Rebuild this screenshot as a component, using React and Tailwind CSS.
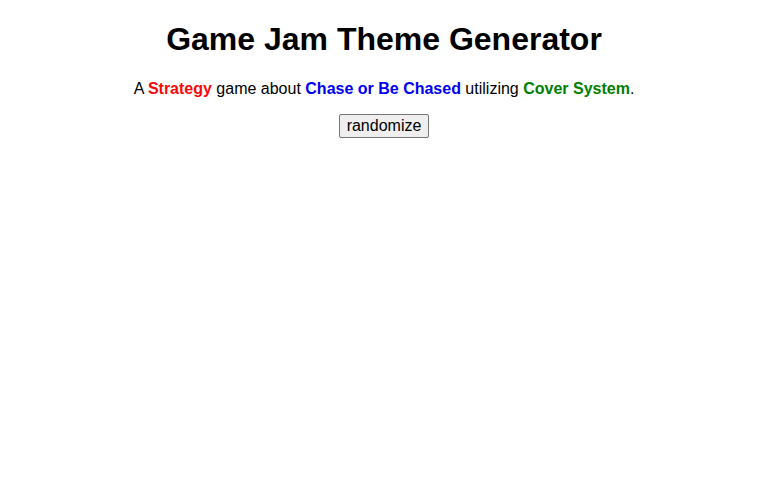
import { useState } from 'react'

const genres = ['Strategy', 'Platformer', 'Puzzle', 'Racing', 'Horror', 'Stealth']
const themes = ['Chase or Be Chased', 'Lost in Space', 'Time Loop', 'Growing Up', 'Two Worlds']
const mechanics = ['Cover System', 'Double Jump', 'Crafting', 'Grappling Hook', 'Card Drafting']

function pick(list) {
  return list[Math.floor(Math.random() * list.length)]
}

export default function App() {
  const [idea, setIdea] = useState({
    genre: genres[0],
    theme: themes[0],
    mechanic: mechanics[0],
  })

  function randomize() {
    setIdea({
      genre: pick(genres),
      theme: pick(themes),
      mechanic: pick(mechanics),
    })
  }

  return (
    <main className="flex min-h-screen flex-col items-center gap-4 bg-white px-2 pt-5 text-center font-['Liberation_Sans',Arial,sans-serif] text-base leading-[18px] text-black">
      <h1 className="mb-1.5 text-[32px] leading-[38px] font-bold">Game Jam Theme Generator</h1>

      <p>
        A <span className="font-bold text-[#f80808]">{idea.genre}</span> game about{' '}
        <span className="font-bold text-[#0000f0]">{idea.theme}</span> utilizing{' '}
        <span className="font-bold text-[#008000]">{idea.mechanic}</span>.
      </p>

      <button
        type="button"
        onClick={randomize}
        className="rounded-[2px] border border-[#767676] bg-[#efefef] px-[7px] py-0.5 hover:bg-[#e5e5e5]"
      >
        randomize
      </button>
    </main>
  )
}
